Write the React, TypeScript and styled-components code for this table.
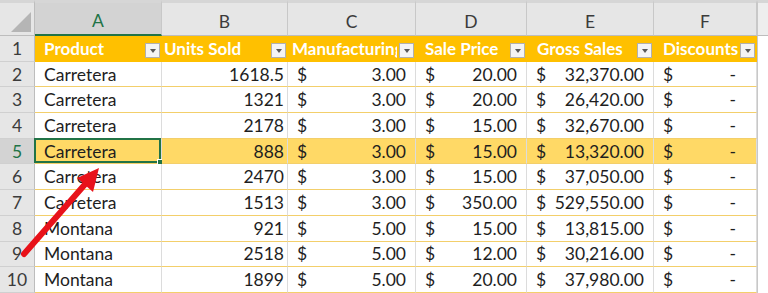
import React from "react";
import styled, { createGlobalStyle, css } from "styled-components";

const GlobalStyle = createGlobalStyle`
  html, body {
    margin: 0;
    padding: 0;
    background: #ffffff;
    overflow: hidden;
  }
  body {
    font-family: Lato, "Liberation Sans", sans-serif;
  }
`;

const COLS = "35px 127px 126px 128px 111px 127px 103px 11px";
const ROW_H = 25.7;

const Wrap = styled.div`
  position: relative;
  width: 768px;
  height: 293px;
  overflow: hidden;
`;

const Sheet = styled.div`
  display: grid;
  grid-template-columns: ${COLS};
  grid-auto-rows: ${ROW_H}px;
  grid-template-rows: 36px;
  font-size: 17.5px;
  color: #1e1e1e;
`;

const Corner = styled.div`
  background: #e6e6e6;
  border-top: 3px solid #d6d6d6;
  border-right: 1px solid #bdbdbd;
  border-bottom: 1px solid #bdbdbd;
  position: relative;
  &::after {
    content: "";
    position: absolute;
    right: 3px;
    bottom: 3px;
    border-style: solid;
    border-width: 0 0 20px 20px;
    border-color: transparent transparent #b5b5b5 transparent;
  }
`;

const ColHead = styled.div<{ $active?: boolean }>`
  display: flex;
  align-items: center;
  justify-content: center;
  padding-top: 4px;
  background: ${({ $active }) => ($active ? "#d3d3d3" : "#e6e6e6")};
  border-top: 3px solid #d6d6d6;
  border-right: 1px solid #c8c8c8;
  border-bottom: ${({ $active }) => ($active ? "2px solid #217346" : "1px solid #bdbdbd")};
  color: ${({ $active }) => ($active ? "#217346" : "#3b3b3b")};
  font-size: 17.5px;
`;

const Filler = styled.div<{ $head?: boolean }>`
  background: ${({ $head }) => ($head ? "#eeeeee" : "#ffffff")};
  border-left: 1px solid #c8c8c8;
  ${({ $head }) =>
    $head &&
    css`
      border-top: 3px solid #d6d6d6;
      border-bottom: 1px solid #bdbdbd;
    `}
`;

const RowHead = styled.div<{ $active?: boolean }>`
  display: flex;
  align-items: center;
  justify-content: center;
  background: ${({ $active }) => ($active ? "#d3d3d3" : "#e6e6e6")};
  border-right: 1px solid #bdbdbd;
  border-bottom: 1px solid #d0d0d0;
  color: ${({ $active }) => ($active ? "#217346" : "#3b3b3b")};
  font-size: 17.5px;
`;

const HeaderCell = styled.div<{ $pad: number }>`
  display: flex;
  align-items: center;
  gap: 2px;
  background: #ffc000;
  color: #ffffff;
  font-size: 17px;
  font-weight: 700;
  padding-left: ${({ $pad }) => $pad}px;
  padding-right: 2px;
  overflow: hidden;
  white-space: nowrap;
`;

const HeaderLabel = styled.span`
  flex: 1;
  min-width: 0;
  overflow: hidden;
  white-space: nowrap;
`;

const FilterBtn = styled.span`
  flex: none;
  width: 13px;
  height: 13px;
  margin-top: 4px;
  background: #f4f4f4;
  border: 1px solid #b0b0b0;
  display: flex;
  align-items: center;
  justify-content: center;
  &::before {
    content: "";
    border-style: solid;
    border-width: 4px 3px 0 3px;
    border-color: #595959 transparent transparent transparent;
  }
`;

const Cell = styled.div<{ $hl?: boolean; $align?: "left" | "right" }>`
  display: flex;
  align-items: center;
  justify-content: ${({ $align }) => ($align === "right" ? "flex-end" : "flex-start")};
  padding: 0 ${({ $align }) => ($align === "right" ? "3px" : "0")} 0 ${({ $align }) => ($align === "right" ? "0" : "9px")};
  background: ${({ $hl }) => ($hl ? "#ffd966" : "#ffffff")};
  border-right: 1px solid #dcdcdc;
  border-bottom: 1px solid #f3cf6b;
  white-space: nowrap;
  position: relative;
`;

const Money = styled(Cell)`
  justify-content: space-between;
  padding: 0 9px 0 9px;
`;

const Dash = styled.span`
  padding-right: 11px;
`;

const Selection = styled.div`
  position: absolute;
  inset: -1px 0 0 -1px;
  border: 2px solid #217346;
  pointer-events: none;
  &::after {
    content: "";
    position: absolute;
    right: -5px;
    bottom: -5px;
    width: 5px;
    height: 5px;
    background: #217346;
    border: 1px solid #ffffff;
  }
`;

const Arrow = styled.svg`
  position: absolute;
  left: 0;
  top: 0;
  pointer-events: none;
`;

const headers: { label: string; pad: number }[] = [
  { label: "Product", pad: 9 },
  { label: "Units Sold", pad: 2 },
  { label: "Manufacturing Price", pad: 4 },
  { label: "Sale Price", pad: 9 },
  { label: "Gross Sales", pad: 10 },
  { label: "Discounts", pad: 9 },
];

const rows: [string, string, string, string, string][] = [
  ["Carretera", "1618.5", "3.00", "20.00", "32,370.00"],
  ["Carretera", "1321", "3.00", "20.00", "26,420.00"],
  ["Carretera", "2178", "3.00", "15.00", "32,670.00"],
  ["Carretera", "888", "3.00", "15.00", "13,320.00"],
  ["Carretera", "2470", "3.00", "15.00", "37,050.00"],
  ["Carretera", "1513", "3.00", "350.00", "529,550.00"],
  ["Montana", "921", "5.00", "15.00", "13,815.00"],
  ["Montana", "2518", "5.00", "12.00", "30,216.00"],
  ["Montana", "1899", "5.00", "20.00", "37,980.00"],
];

export default function App() {
  return (
    <>
      <GlobalStyle />
      <Wrap>
        <Sheet>
          <Corner />
          {["A", "B", "C", "D", "E", "F"].map((c) => (
            <ColHead key={c} $active={c === "A"}>
              {c}
            </ColHead>
          ))}
          <Filler $head />

          <RowHead>1</RowHead>
          {headers.map((h) => (
            <HeaderCell key={h.label} $pad={h.pad}>
              <HeaderLabel>{h.label}</HeaderLabel>
              <FilterBtn />
            </HeaderCell>
          ))}
          <Filler />

          {rows.map((r, i) => {
            const n = i + 2;
            const hl = n === 5;
            return (
              <React.Fragment key={n}>
                <RowHead $active={hl}>{n}</RowHead>
                <Cell $hl={hl}>
                  {r[0]}
                  {hl && <Selection />}
                </Cell>
                <Cell $hl={hl} $align="right">
                  {r[1]}
                </Cell>
                <Money $hl={hl}>
                  <span>$</span>
                  <span>{r[2]}</span>
                </Money>
                <Money $hl={hl}>
                  <span>$</span>
                  <span>{r[3]}</span>
                </Money>
                <Money $hl={hl}>
                  <span>$</span>
                  <span>{r[4]}</span>
                </Money>
                <Money $hl={hl}>
                  <span>$</span>
                  <Dash>-</Dash>
                </Money>
                <Filler />
              </React.Fragment>
            );
          })}
        </Sheet>
        <Arrow width="768" height="293" viewBox="0 0 768 293">
          <line x1="24" y1="254" x2="87" y2="182" stroke="#e8121a" strokeWidth="6" strokeLinecap="round" />
          <polygon points="99,168 93,192 77,178" fill="#e8121a" />
        </Arrow>
      </Wrap>
    </>
  );
}
